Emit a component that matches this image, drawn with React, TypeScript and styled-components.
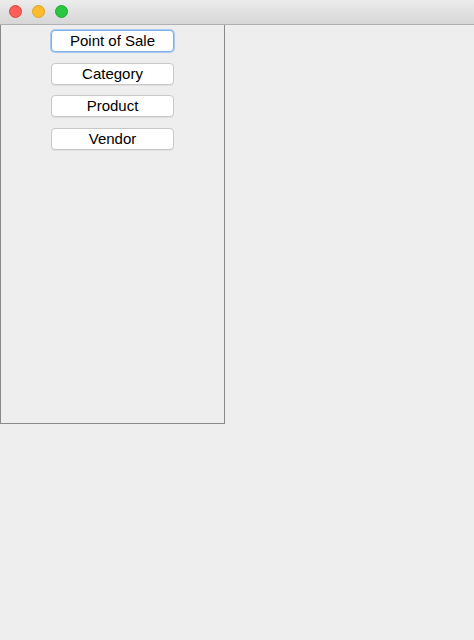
import React from "react";
import styled, { createGlobalStyle } from "styled-components";

const Global = createGlobalStyle`
  html, body { margin: 0; padding: 0; background: #eeeeee; }
  body { font-family: "Liberation Sans", Arial, sans-serif; }
`;

const Window = styled.div`
  width: 474px;
  height: 640px;
  display: flex;
  flex-direction: column;
  background: #eeeeee;
  overflow: hidden;
`;

const TitleBar = styled.div`
  height: 25px;
  flex: none;
  box-sizing: border-box;
  display: flex;
  align-items: center;
  gap: 10px;
  padding-left: 9px;
  padding-bottom: 1px;
  background: linear-gradient(#ececec, #d6d6d6);
  border-bottom: 1px solid #b0b0b0;
`;

const Light = styled.span<{ $fill: string; $edge: string }>`
  width: 13px;
  height: 13px;
  border-radius: 50%;
  background: ${(p) => p.$fill};
  box-sizing: border-box;
  border: 0.5px solid ${(p) => p.$edge};
`;

const Content = styled.div`
  flex: 1;
  display: flex;
  align-items: flex-start;
`;

const Panel = styled.div`
  width: 225px;
  height: 399px;
  box-sizing: border-box;
  border: 1px solid #8a8a8a;
  border-top: none;
  display: flex;
  flex-direction: column;
  align-items: center;
  gap: 10.67px;
  padding-top: 5px;
`;

const Button = styled.button<{ $focused?: boolean }>`
  width: 123px;
  height: 22px;
  flex: none;
  box-sizing: border-box;
  background: #ffffff;
  border: 1px solid ${(p) => (p.$focused ? "#7fb0e8" : "#c8c8c8")};
  box-shadow: ${(p) =>
    p.$focused ? "0 0 0 1px #a9c9f0" : "0 1px 0 rgba(0,0,0,0.06)"};
  border-radius: 4px;
  font-family: "Liberation Sans", Arial, sans-serif;
  font-size: 15px;
  color: #000;
  padding: 0;
  line-height: 20px;
`;

export default function App() {
  return (
    <>
      <Global />
      <Window>
        <TitleBar>
          <Light $fill="#fc5f57" $edge="#e0443e" />
          <Light $fill="#fdbc2e" $edge="#dea123" />
          <Light $fill="#28c840" $edge="#1aab29" />
        </TitleBar>
        <Content>
          <Panel>
            <Button $focused>Point of Sale</Button>
            <Button>Category</Button>
            <Button>Product</Button>
            <Button>Vendor</Button>
          </Panel>
        </Content>
      </Window>
    </>
  );
}
